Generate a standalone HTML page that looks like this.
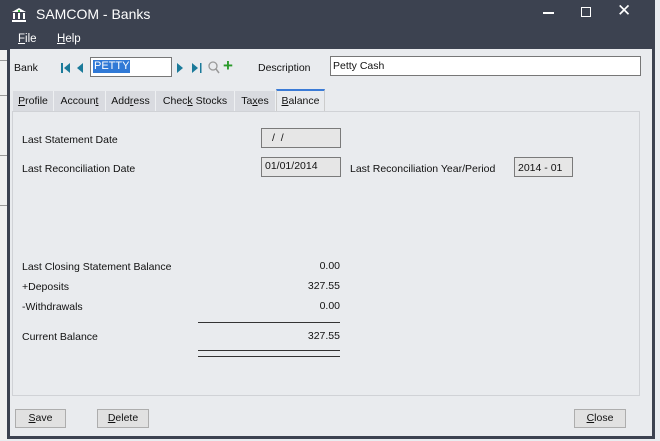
<!DOCTYPE html>
<html><head><style>
body{margin:0;width:660px;height:441px;background:#e9ecf0;position:relative;overflow:hidden;font-family:"Liberation Sans",sans-serif;font-size:10.5px;color:#111}
.a{position:absolute}
.box{position:absolute;border:1px solid #7a7a7a;background:#e6e6e6;box-sizing:border-box;padding:2px 3px;font-size:10.5px}
.btn{position:absolute;border:1px solid #adadad;background:#e1e1e1;box-sizing:border-box;text-align:center;line-height:17px;font-size:10.5px}
.tab{position:absolute;top:91px;height:20px;line-height:20px;background:#d9dbe0;border-right:1px solid #eef0f2;text-align:center;font-size:10.5px}
.r{text-align:right}
</style></head><body>
<div class="a" style="left:0;top:40px;width:8px;height:400px;background:#f0f0f0"></div>
<div class="a" style="left:0;top:60px;width:7px;height:1px;background:#999"></div>
<div class="a" style="left:0;top:95px;width:7px;height:1px;background:#999"></div>
<div class="a" style="left:0;top:155px;width:7px;height:1px;background:#999"></div>
<div class="a" style="left:0;top:205px;width:7px;height:1px;background:#999"></div>
<div class="a" style="left:0;top:0;width:655px;height:50px;background:#3c4250"></div>
<div class="a" style="left:7px;top:48px;width:648px;height:391px;background:#3c4250"></div>
<div class="a" style="left:10px;top:49px;width:642px;height:387px;background:#e9ebee"></div>
<svg class="a" style="left:11px;top:7px" width="16" height="16" viewBox="0 0 16 16"><path d="M1 5L8 1l7 4z" fill="#fff"/><rect x="2" y="6" width="2" height="6" fill="#fff"/><rect x="7" y="6" width="2" height="6" fill="#fff"/><rect x="12" y="6" width="2" height="6" fill="#fff"/><rect x="1" y="13" width="14" height="2" fill="#fff"/><rect x="7" y="3" width="2" height="2" fill="#4c4"/></svg>
<div class="a" style="left:36px;top:6px;color:#fff;font-size:14px">SAMCOM - Banks</div>
<div class="a" style="left:543px;top:12px;width:11px;height:2px;background:#fff"></div>
<div class="a" style="left:581px;top:7px;width:8px;height:8px;border:1.5px solid #fff"></div>
<div class="a" style="left:617px;top:1px;color:#fff;font-size:17px">✕</div>
<div class="a" style="left:18px;top:33px;color:#fff;font-size:11.5px"><u>F</u>ile</div>
<div class="a" style="left:57px;top:33px;color:#fff;font-size:11.5px"><u>H</u>elp</div>

<div class="a" style="left:14px;top:62px">Bank</div>
<svg class="a" style="left:60px;top:61px" width="30" height="14"><rect x="1" y="2" width="2" height="10" fill="#1b7a9a"/><path d="M10 2L4 7l6 5z" fill="#1b7a9a"/><path d="M23 2L17 7l6 5z" fill="#1b7a9a"/></svg>
<div class="a" style="left:90px;top:57px;width:82px;height:20px;border:1px solid #777;background:#fff;box-sizing:border-box"><span style="position:absolute;left:2px;top:2px;background:#3079d6;color:#fff;padding:0 1px;font-size:11px;line-height:13px">PETTY</span></div>
<svg class="a" style="left:175px;top:61px" width="30" height="14"><path d="M2 2l6 5-6 5z" fill="#1b7a9a"/><path d="M17 2l6 5-6 5z" fill="#1b7a9a"/><rect x="25" y="2" width="1.5" height="10" fill="#1b7a9a"/></svg>
<svg class="a" style="left:207px;top:60px" width="14" height="15"><circle cx="6" cy="6" r="4" fill="none" stroke="#999" stroke-width="1.3"/><path d="M9 9l3 4" stroke="#999" stroke-width="1.5"/></svg>
<div class="a" style="left:223px;top:56px;color:#2a9a2a;font-size:17px;font-weight:bold">+</div>
<div class="a" style="left:258px;top:62px">Description</div>
<div class="a" style="left:330px;top:56px;width:311px;height:20px;border:1px solid #777;background:#fff;box-sizing:border-box;padding:3px 2px">Petty Cash</div>

<div class="tab" style="left:13px;width:40px"><u>P</u>rofile</div>
<div class="tab" style="left:54px;width:51px">Accoun<u>t</u></div>
<div class="tab" style="left:106px;width:49px">Add<u>r</u>ess</div>
<div class="tab" style="left:156px;width:78px">Chec<u>k</u> Stocks</div>
<div class="tab" style="left:235px;width:40px">Ta<u>x</u>es</div>
<div class="a" style="left:276px;top:89px;width:49px;height:23px;background:#e9ebee;border-top:2px solid #3b7bd6;border-left:1px solid #ccc;border-right:1px solid #ccc;box-sizing:border-box;text-align:center;line-height:20px"><u>B</u>alance</div>
<div class="a" style="left:12px;top:111px;width:628px;height:285px;border:1px solid #d0d2d6;box-sizing:border-box"></div>
<div class="a" style="left:12px;top:111px;width:264px;height:1px;background:#d0d2d6"></div>

<div class="a" style="left:22px;top:134px">Last Statement Date</div>
<div class="box" style="left:261px;top:128px;width:80px;height:20px;padding-left:10px;padding-top:3px">/ &nbsp;/</div>
<div class="a" style="left:22px;top:163px">Last Reconciliation Date</div>
<div class="box" style="left:261px;top:157px;width:80px;height:20px">01/01/2014</div>
<div class="a" style="left:350px;top:163px">Last Reconciliation Year/Period</div>
<div class="box" style="left:514px;top:157px;width:59px;height:20px;padding-top:4px">2014 - 01</div>

<div class="a" style="left:22px;top:261px">Last Closing Statement Balance</div>
<div class="a r" style="left:260px;top:260px;width:80px">0.00</div>
<div class="a" style="left:22px;top:281px">+Deposits</div>
<div class="a r" style="left:260px;top:280px;width:80px">327.55</div>
<div class="a" style="left:22px;top:301px">-Withdrawals</div>
<div class="a r" style="left:260px;top:300px;width:80px">0.00</div>
<div class="a" style="left:198px;top:322px;width:142px;height:1px;background:#333"></div>
<div class="a" style="left:22px;top:331px">Current Balance</div>
<div class="a r" style="left:260px;top:330px;width:80px">327.55</div>
<div class="a" style="left:198px;top:350px;width:142px;height:1px;background:#333"></div>
<div class="a" style="left:198px;top:356px;width:142px;height:1px;background:#333"></div>

<div class="btn" style="left:15px;top:409px;width:51px;height:19px"><u>S</u>ave</div>
<div class="btn" style="left:97px;top:409px;width:52px;height:19px"><u>D</u>elete</div>
<div class="btn" style="left:574px;top:409px;width:52px;height:19px"><u>C</u>lose</div>
</body></html>
